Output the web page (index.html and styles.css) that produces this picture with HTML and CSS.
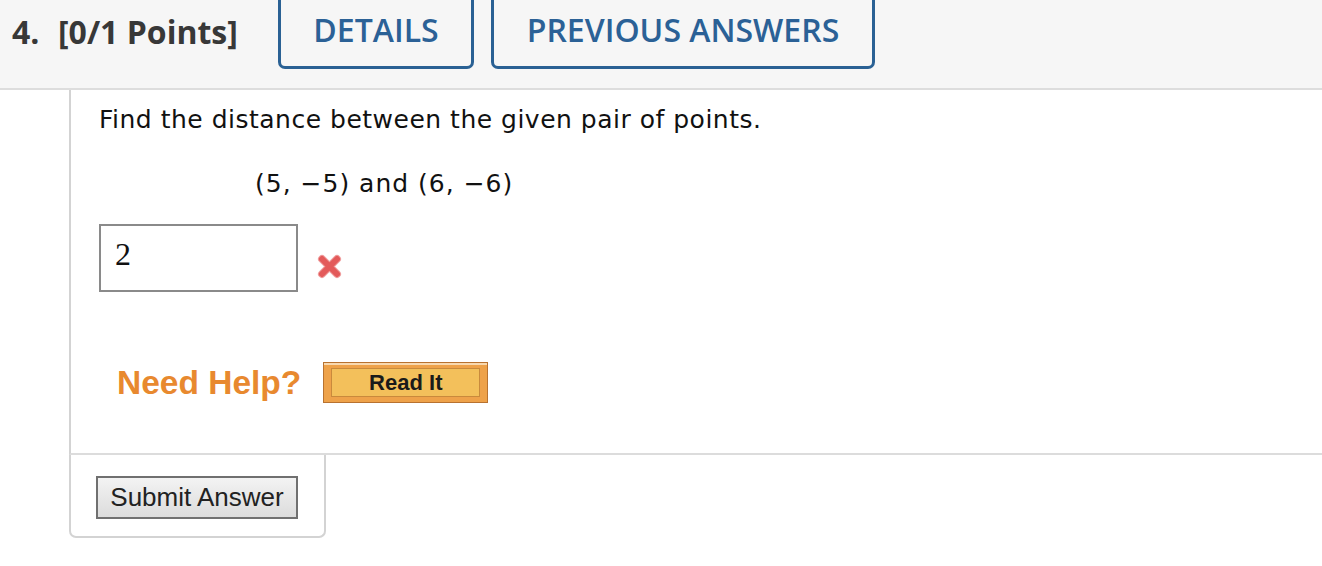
FILE: index.html
```html
<!DOCTYPE html>
<html lang="en">
<head>
<meta charset="utf-8">
<title>Question 4</title>
<link rel="stylesheet" href="styles.css">
</head>
<body>
<header class="header">
  <div class="title"><span class="qnum">4.</span><span class="points">[0/1 Points]</span></div>
  <nav class="tabs">
    <div class="tab tab-details">DETAILS</div>
    <div class="tab tab-prev">PREVIOUS ANSWERS</div>
  </nav>
</header>
<section class="panel">
  <p class="prompt">Find the distance between the given pair of points.</p>
  <p class="points-pair">(5, &minus;5) and (6, &minus;6)</p>
  <div class="answer-row">
    <div class="answer-box">2</div>
    <svg class="wrong" width="27" height="27" viewBox="0 0 27 27" aria-label="incorrect">
      <g stroke-linecap="round">
        <path d="M6 6 L21 21 M21 6 L6 21" stroke="#f0a0a0" stroke-width="8"/>
        <path d="M6 6 L21 21 M21 6 L6 21" stroke="#e35a5a" stroke-width="6"/>
      </g>
    </svg>
  </div>
  <div class="help-row">
    <span class="need-help">Need Help?</span>
    <div class="read-it"><div class="read-it-inner">Read It</div></div>
  </div>
</section>
<div class="submit-tab">
  <button class="submit-btn" type="button">Submit Answer</button>
</div>
</body>
</html>
```
FILE: styles.css
```css
* { box-sizing: border-box; }
body {
  margin: 0;
  background: #ffffff;
  font-family: "DejaVu Sans", Verdana, sans-serif;
}
.header {
  display: flex;
  align-items: flex-start;
  height: 90px;
  background: #f6f6f6;
  border-bottom: 2px solid #dddddd;
}
.title {
  display: flex;
  align-items: center;
  height: 62px;
  padding-left: 12px;
  font-family: "Open Sans", sans-serif;
  font-weight: 700;
  font-size: 32px;
  color: #383838;
  width: 278px;
}
.qnum { width: 46px; }
.tabs {
  display: flex;
  gap: 17px;
}
.tab {
  display: flex;
  align-items: center;
  justify-content: center;
  height: 69px;
  padding-bottom: 7px;
  border: 3px solid #2a6194;
  border-top: none;
  border-radius: 0 0 7px 7px;
  font-family: "Open Sans", sans-serif;
  font-weight: 600;
  font-size: 32px;
  color: #2b6196;
}
.tab-details { width: 196px; }
.tab-prev { width: 384px; }

.panel {
  margin-left: 69px;
  border-left: 2px solid #d3d3d3;
  border-bottom: 2px solid #dcdcdc;
  padding: 15px 0 50px 28px;
}
.prompt {
  margin: 0;
  font-size: 25px;
  letter-spacing: 0.5px;
  line-height: 30px;
  color: #111;
}
.points-pair {
  margin: 34px 0 0 0;
  padding-left: 156px;
  font-size: 25px;
  letter-spacing: 1px;
  line-height: 30px;
  color: #111;
}
.answer-row {
  display: flex;
  align-items: flex-start;
  gap: 18px;
  margin-top: 25px;
}
.answer-box {
  width: 199px;
  height: 68px;
  border: 2px solid #8a8a8a;
  display: flex;
  align-items: center;
  padding: 0 0 8px 14px;
  font-family: "Liberation Serif", serif;
  font-size: 32px;
  color: #111;
}
.wrong { margin-top: 29px; }
.help-row {
  display: flex;
  align-items: center;
  gap: 22px;
  margin-top: 70px;
  margin-left: 18px;
}
.need-help {
  font-family: "Liberation Sans", Arial, sans-serif;
  font-weight: 700;
  font-size: 33.5px;
  line-height: 41px;
  color: #e8892f;
}
.read-it {
  width: 165px;
  height: 41px;
  border: 1px solid #b87230;
  background: #eea24a;
  box-shadow: inset 0 2px 0 #f8d9b0;
  padding: 5px 7px 5px 7px;
}
.read-it-inner {
  height: 100%;
  border: 1px solid #c98a3c;
  background: #f3c05b;
  display: flex;
  align-items: center;
  justify-content: center;
  font-family: "Liberation Sans", Arial, sans-serif;
  font-weight: 700;
  font-size: 22px;
  color: #1a1a1a;
}
.submit-tab {
  margin-left: 69px;
  width: 257px;
  border: 2px solid #d3d3d3;
  border-top: none;
  border-radius: 0 0 7px 7px;
  padding: 21px 0 17px 25px;
}
.submit-btn {
  display: block;
  width: 202px;
  height: 43px;
  border: 2px solid #707070;
  border-radius: 0;
  background: linear-gradient(#f3f3f3, #dcdcdc);
  font-family: "Liberation Sans", Arial, sans-serif;
  font-size: 26px;
  color: #222;
  padding: 0;
}
```
